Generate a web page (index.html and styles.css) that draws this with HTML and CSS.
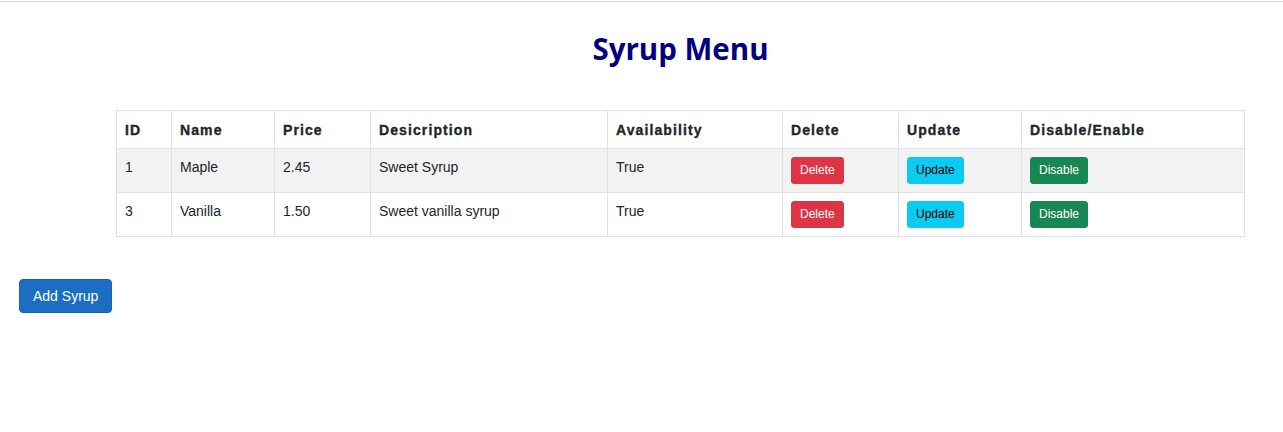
FILE: index.html
```html
<!DOCTYPE html>
<html>
<head>
<meta charset="utf-8">
<link rel="stylesheet" href="styles.css">
</head>
<body>
<div class="topline"></div>
<main class="content">
  <h1 class="title">Syrup Menu</h1>
  <table class="menu-table">
    <colgroup>
      <col class="c-id"><col class="c-name"><col class="c-price"><col class="c-desc">
      <col class="c-avail"><col class="c-del"><col class="c-upd"><col class="c-dis">
    </colgroup>
    <thead>
      <tr>
        <th>ID</th><th>Name</th><th>Price</th><th>Desicription</th><th>Availability</th><th>Delete</th><th>Update</th><th>Disable/Enable</th>
      </tr>
    </thead>
    <tbody>
      <tr class="odd">
        <td>1</td><td>Maple</td><td>2.45</td><td>Sweet Syrup</td><td>True</td>
        <td><button class="btn btn-sm btn-danger">Delete</button></td>
        <td><button class="btn btn-sm btn-info">Update</button></td>
        <td><button class="btn btn-sm btn-success">Disable</button></td>
      </tr>
      <tr>
        <td>3</td><td>Vanilla</td><td>1.50</td><td>Sweet vanilla syrup</td><td>True</td>
        <td><button class="btn btn-sm btn-danger">Delete</button></td>
        <td><button class="btn btn-sm btn-info">Update</button></td>
        <td><button class="btn btn-sm btn-success">Disable</button></td>
      </tr>
    </tbody>
  </table>
</main>
<div class="actions">
  <button class="btn btn-primary">Add Syrup</button>
</div>
</body>
</html>
```
FILE: styles.css
```css
html, body {
  margin: 0;
  padding: 0;
  background: #fff;
}
body {
  font-family: "Liberation Sans", Arial, sans-serif;
  font-size: 14px;
  color: #212529;
}
.topline {
  height: 1px;
  border-top: 1px solid #fff;
  background: #d4d4d4;
}
.content {
  margin: 0 38px 0 116px;
}
.title {
  font-family: "Open Sans", "Noto Sans", sans-serif;
  font-weight: 700;
  font-size: 29.5px;
  line-height: 38px;
  color: #000080;
  text-align: center;
  margin: 28px 0 42px;
}
.menu-table {
  width: 100%;
  border-collapse: collapse;
  table-layout: fixed;
}
.c-id { width: 55px; }
.c-name { width: 103px; }
.c-price { width: 96px; }
.c-desc { width: 237px; }
.c-avail { width: 175px; }
.c-del { width: 116px; }
.c-upd { width: 123px; }
.c-dis { width: auto; }
.menu-table th,
.menu-table td {
  border: 1px solid #dee2e6;
  padding: 8px;
  text-align: left;
  vertical-align: top;
  line-height: 21px;
}
.menu-table th {
  font-weight: 700;
  letter-spacing: 1.1px;
  color: #212529;
  -webkit-text-stroke: 0.35px #212529;
  padding-top: 9px;
  padding-bottom: 7px;
}
.menu-table tr.odd td {
  background: #f2f2f2;
}
.btn {
  font-family: "Liberation Sans", Arial, sans-serif;
  border: 1px solid transparent;
  border-radius: 3px;
  cursor: pointer;
  display: inline-block;
  vertical-align: top;
  margin: 0;
}
.btn-sm {
  font-size: 12px;
  line-height: 17px;
  padding: 4px 8px;
}
.btn-danger { background: #dc3545; border-color: #dc3545; color: #fff; }
.btn-info { background: #0dcaf0; border-color: #0dcaf0; color: #000; }
.btn-success { background: #198754; border-color: #198754; color: #fff; }
.btn-primary {
  background: #1b6ec2;
  border-color: #1861ac;
  color: #fff;
  font-size: 14px;
  line-height: 20px;
  padding: 6px 13px;
  border-radius: 4px;
}
.actions {
  margin: 42px 0 0 19px;
}
```
